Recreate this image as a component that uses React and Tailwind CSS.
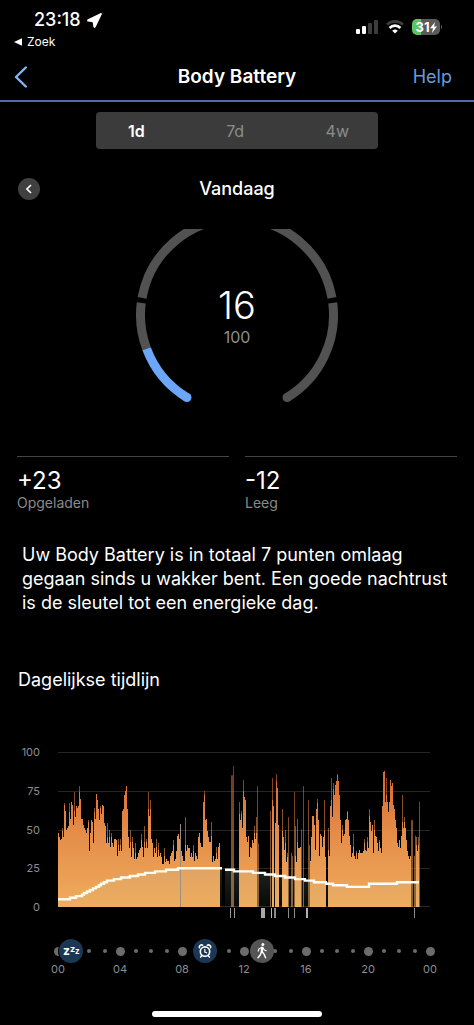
import React, { useState } from 'react';

const TABS = ['1d', '7d', '4w'];

// One value per column, `start` is the column where the segment begins
const STRESS = [
  {
    start: 0,
    values: [
      48, 45, 43, 44, 51, 45, 67, 62, 50, 51, 52, 67, 57, 68, 66, 53, 74, 58, 65, 64, 65, 78, 70,
      57, 57, 53, 51, 50, 48, 51, 56, 36, 48, 56, 55, 41, 64, 57, 73, 69, 63, 56, 65, 60, 66, 65,
      54, 52, 41, 54, 41, 50, 39, 48, 41, 39, 44, 44, 43, 33, 44, 36, 44, 36, 62, 63, 72, 75, 78,
      63, 45, 38, 50, 32, 45, 38, 31, 41, 31, 32, 35, 37, 38, 47, 39, 32, 52, 38, 44, 38, 74, 59,
      69, 44, 41, 32, 38, 35, 44, 32, 41, 33, 35, 32, 28, 28, 38, 29, 31, 30, 30, 28, 33, 35, 36,
      43, 30, 31, 36, 46, 47, 44, 53, 36, 33, 30, 30, 58, 36, 40, 38, 38, 32, 35, 32, 40, 30, 35,
      33, 31, 45, 48, 41, 39, 39, 68, 75, 56, 57, 49, 45, 42, 42, 55, 29, 33, 30, 31, 39, 31, 39,
      41,
    ],
  },
  {
    start: 181,
    values: [
      68, 56, 62, 51, 82, 71, 69, 45, 42, 46, 32, 39, 38, 43, 41, 52, 44, 58,
    ],
  },
  { start: 214, values: [83, 65] },
  { start: 217, values: [54, 86, 77, 53] },
  { start: 224, values: [63, 45, 37, 50, 29, 32] },
  { start: 237, values: [52, 29, 57, 38, 38, 39] },
  {
    start: 252,
    values: [30, 45, 59, 59, 53, 37, 63, 70, 56, 33, 47, 46, 39, 45, 69, 32],
  },
  {
    start: 270,
    values: [
      51, 33, 65, 83, 58, 80, 72, 79, 81, 86, 81, 72, 56, 41, 53, 46, 47, 56, 57, 62, 56, 46, 40,
      32, 35, 47, 33, 31, 36, 31, 35, 37, 35, 35, 35, 36, 44, 37, 36, 45, 38, 63, 55, 49, 53, 35,
      56, 46, 45, 41, 36, 43, 38, 35, 65, 87, 88, 68, 83, 68, 61, 68, 82, 78, 80, 66, 63, 56, 51,
      41, 39, 43, 38, 46, 72, 51, 58, 51, 43, 36, 33, 31, 33,
    ],
  },
  { start: 358, values: [45, 36, 45] },
];

// Short measurements, drawn faded
const FADED = [
  [173, 85], [174, 85], [175, 91], [199, 78], [200, 41], [212, 62], [229, 35], [230, 58],
  [233, 35], [234, 33], [236, 74], [243, 50], [245, 78], [250, 69], [251, 40], [353, 56],
  [354, 56], [356, 33], [357, 46], [361, 68],
];

const BATTERY = [
  [0, 5], [12, 6], [18, 7], [24, 8], [26, 9], [29, 10], [32, 11], [35, 12], [38, 13], [41, 14],
  [43, 15], [46, 16], [49, 17], [56, 18], [63, 19], [72, 20], [80, 21], [87, 22], [97, 23],
  [108, 24], [120, 25], [164, 25],
];
const BATTERY_AWAKE = [
  [167, 24], [176, 23], [195, 22], [207, 21], [217, 20], [227, 19], [237, 18], [247, 17],
  [256, 16], [268, 15], [275, 14], [289, 13], [311, 15], [339, 16], [361, 16],
];

const ACTIVITY = [
  [172, 1, '#9a9a9a'], [176, 1, '#9a9a9a'], [203, 4, '#a8a8a8'], [213, 1, '#b5b5b5'],
  [216, 2, '#8a8a8a'], [230, 1, '#8a8a8a'], [236, 1, '#8a8a8a'], [248, 2, '#b0b0b0'],
  [356, 1, '#8a8a8a'],
];

const LEVELS = [100, 75, 50, 25, 0];
const HOURS = Array.from({ length: 25 }, (_, i) => i);

const toY = (value) => 155 - value * 1.55;

const stepPath = (points) =>
  points
    .map(([x, v], i) => (i === 0 ? `M${x} ${toY(v)}` : `H${x}V${toY(v)}`))
    .join('');

const areaPath = (points) =>
  `${stepPath(points)}V155H${points[0][0]}Z`;

const arc = (from, to) => {
  const point = (deg) => {
    const rad = (deg * Math.PI) / 180;
    return `${101 + 96.5 * Math.cos(rad)} ${86 + 96.5 * Math.sin(rad)}`;
  };
  return `M${point(from)}A96.5 96.5 0 0 1 ${point(to)}`;
};

const StatusBar = () => (
  <div className="flex items-start justify-between pl-[14px] pr-8 pt-2">
    <div>
      <div className="flex items-center gap-[6px] pl-5 text-lg leading-6 font-medium">
        23:18
        <svg width="15" height="15" viewBox="0 0 15 15" fill="currentColor">
          <path d="M13.4.2.9 6.2C-.3 6.9-.1 8.4 1.2 8.5L5.7 9.2 6.4 13.8C6.6 15.1 8.1 15.3 8.7 14.1L14.7 1.6C15.1.5 14.5-.2 13.4.2Z" />
        </svg>
      </div>
      <a href="#zoek" className="flex items-center gap-1 text-xs leading-5">
        <svg width="9" height="8" viewBox="0 0 9 8" fill="currentColor">
          <path d="M0 4 8 7.8V.2Z" />
        </svg>
        Zoek
      </a>
    </div>
    <div className="flex items-center gap-2 pt-[11px]">
      <svg width="22" height="14" viewBox="0 0 22 14">
        <rect x="0" y="9" width="4" height="5" rx="1" fill="#fff" />
        <rect x="6" y="6" width="4" height="8" rx="1" fill="#fff" />
        <rect x="12" y="3" width="4" height="11" rx="1" fill="#3c3c3c" />
        <rect x="18" y="0" width="4" height="14" rx="1" fill="#3c3c3c" />
      </svg>
      <svg width="18" height="14" viewBox="0 0 18 14" fill="none" strokeWidth="2.6">
        <path d="M1 4.6A11.5 11.5 0 0 1 17 4.6" stroke="#3c3c3c" />
        <path d="M3.6 8A7.4 7.4 0 0 1 14.4 8" stroke="#fff" />
        <path d="M6.2 10.7A4.2 4.2 0 0 1 11.8 10.7L9 13.6Z" fill="#fff" />
      </svg>
      <div className="flex items-center">
        <div className="flex h-4 w-7 items-center justify-center rounded-[5px] bg-linear-to-r from-[#5cc466] from-31% to-[#5a5a5a] to-31% text-[13px] leading-4 font-bold">
          31
          <svg width="7" height="11" viewBox="0 0 7 11" fill="currentColor">
            <path d="M5 0 0 6.3H3L2 11 7 4.6H4Z" />
          </svg>
        </div>
        <div className="ml-px h-1 w-px rounded-r bg-[#5a5a5a]" />
      </div>
    </div>
  </div>
);

const Gauge = () => (
  <div className="relative mx-auto w-[202px]">
    <svg width="202" height="176" viewBox="0 0 202 176" fill="none" strokeWidth="9">
      <path d={arc(159.5, 187.2)} stroke="#525252" />
      <path d={arc(190.2, 349.8)} stroke="#525252" />
      <path d={arc(352.8, 418.8)} stroke="#525252" />
      <circle cx="151" cy="168.5" r="4.5" fill="#525252" />
      <path d={arc(121.2, 159.5)} stroke="#6ca6f8" />
      <circle cx="51" cy="168.5" r="4.5" fill="#6ca6f8" />
    </svg>
    <div className="absolute inset-0 flex flex-col items-center pt-14">
      <span className="text-[38px] leading-10 font-light">16</span>
      <span className="text-base text-[#8e8e8e]">100</span>
    </div>
  </div>
);

const Stat = ({ value, label }) => (
  <div className="border-t border-[#444] pt-2">
    <p className="text-2xl leading-8">{value}</p>
    <p className="text-sm leading-3 text-[#8a8a8a]">{label}</p>
  </div>
);

const Chart = () => (
  <svg viewBox="0 0 372 167" preserveAspectRatio="none" className="h-[167px] w-full">
    <defs>
      <linearGradient id="stress" x1="0" y1="0" x2="0" y2="155" gradientUnits="userSpaceOnUse">
        <stop offset="0.1" stopColor="#d9642c" />
        <stop offset="0.5" stopColor="#e38b48" />
        <stop offset="1" stopColor="#f0ad5c" />
      </linearGradient>
      <linearGradient id="battery" x1="0" y1="115" x2="0" y2="155" gradientUnits="userSpaceOnUse">
        <stop offset="0" stopColor="#b4c8b4" stopOpacity="0.18" />
        <stop offset="1" stopColor="#b4c8b4" stopOpacity="0.04" />
      </linearGradient>
    </defs>
    {LEVELS.map((level) => (
      <rect key={level} x="0" y={Math.min(Math.round(toY(level)), 154)} width="372" height="1" fill="#262626" />
    ))}
    {STRESS.map(({ start, values }) =>
      values.map((value, i) => {
        // the tip of a lone spike is faded
        const solid = Math.min(value, Math.max(values[i - 1] || 0, values[i + 1] || 0) + 4);
        return (
          <g key={start + i} fill="url(#stress)" shapeRendering="crispEdges">
            <rect x={start + i} y={toY(solid)} width="1" height={155 - toY(solid)} />
            <rect x={start + i} y={toY(value)} width="1" height={toY(solid) - toY(value)} opacity="0.6" />
          </g>
        );
      })
    )}
    {FADED.map(([x, value]) => (
      <rect key={x} x={x} y={toY(value)} width="1" height={155 - toY(value)} fill="url(#stress)" opacity="0.55" />
    ))}
    <rect x="122" y="72" width="1" height="83" fill="#9a8a80" />
    <path d={areaPath(BATTERY)} fill="url(#battery)" />
    <path d={areaPath(BATTERY_AWAKE)} fill="url(#battery)" />
    <path d={stepPath(BATTERY)} fill="none" stroke="#fffdf0" strokeWidth="2.4" />
    <path d={stepPath(BATTERY_AWAKE)} fill="none" stroke="#fff" strokeWidth="2.4" />
    {ACTIVITY.map(([x, width, color]) => (
      <rect key={x} x={x} y="156" width={width} height="10" fill={color} />
    ))}
  </svg>
);

const Timeline = () => (
  <div className="relative pt-5">
    <div className="flex h-6 items-center justify-between">
      {HOURS.map((hour) => (
        <div key={hour} className="flex w-0 justify-center">
          {hour % 4 === 0 ? (
            <span className="size-[9px] shrink-0 rounded-full bg-[#6c6c6c]" />
          ) : (
            <span className="size-1 shrink-0 rounded-full bg-[#6c6c6c]" />
          )}
        </div>
      ))}
    </div>
    <div className="flex justify-between text-[11px] leading-3 text-[#8e8e8e]">
      {HOURS.filter((hour) => hour % 4 === 0).map((hour) => (
        <div key={hour} className="flex w-0 justify-center">
          {String(hour % 24).padStart(2, '0')}
        </div>
      ))}
    </div>
    <div className="absolute top-5 left-[3.6%] flex size-6 -translate-x-1/2 items-center justify-center rounded-full bg-[#1c3754] font-bold ring-1 ring-black">
      <span className="text-xs leading-3">z</span>
      <span className="pb-1 text-[9px] leading-3">z</span>
      <span className="text-[8px] leading-3">z</span>
    </div>
    <div className="absolute top-5 left-[39.5%] flex size-6 -translate-x-1/2 items-center justify-center rounded-full bg-[#1c3754] ring-1 ring-black">
      <svg width="14" height="14" viewBox="0 0 14 14" fill="none" stroke="currentColor" strokeLinecap="round">
        <circle cx="7" cy="7.6" r="4.7" strokeWidth="1.6" />
        <path d="M1.4 3.6A2.2 2.2 0 0 1 4.6 1.2M12.6 3.6A2.2 2.2 0 0 0 9.4 1.2" strokeWidth="1.6" />
        <path d="M3.8 11.4 2.6 13.2M10.2 11.4 11.4 13.2" strokeWidth="1.4" />
        <path d="M6.8 5.4V8L8.6 8.8" strokeWidth="1.2" />
      </svg>
    </div>
    <div className="absolute top-5 left-[54.8%] flex size-6 -translate-x-1/2 items-center justify-center rounded-full bg-[#555]">
      <svg width="12" height="18" viewBox="0 0 12 18" fill="none" stroke="currentColor" strokeLinecap="round" strokeLinejoin="round">
        <circle cx="6.9" cy="2.6" r="1.5" fill="currentColor" stroke="none" />
        <path d="M6.2 5.8 5.8 9.6" strokeWidth="2.4" />
        <path d="M5.4 5.6 2.8 7 2.2 9.2M7 5.8 8.3 8 10.2 8.8" strokeWidth="1.1" />
        <path d="M5.4 10 4.4 12.8 2 15.8M6.2 9.8 8.2 12.4 9.6 15.8" strokeWidth="1.4" />
      </svg>
    </div>
  </div>
);

const App = () => {
  const [tab, setTab] = useState('1d');

  return (
    <div className="flex min-h-screen flex-col bg-black font-['Inter',sans-serif] text-white">
      <StatusBar />

      {/* Header */}
      <header className="grid h-[50px] grid-cols-3 items-center border-b-2 border-[#5868ad] px-[14px] pt-[2px] text-[19px]">
        <button aria-label="Terug" className="justify-self-start text-[#86b4f7]">
          <svg width="14" height="22" viewBox="0 0 14 22" fill="none" stroke="currentColor" strokeWidth="2.4" strokeLinecap="round" strokeLinejoin="round">
            <path d="M11.8 1.5 2 11 11.8 20.5" />
          </svg>
        </button>
        <h1 className="text-center font-semibold">Body Battery</h1>
        <a href="#help" className="justify-self-end pr-2 text-lg text-[#6b98de]">Help</a>
      </header>

      <main className="flex flex-1 flex-col">
        <div className="mx-24 mt-[10px] flex h-[37px] items-center justify-between rounded-sm bg-[#3b3b3b] pr-[29px] pl-8 text-base">
          {TABS.map((name) => (
            <button
              key={name}
              onClick={() => setTab(name)}
              className={tab === name ? 'font-semibold text-white' : 'text-[#8c8c8c]'}
            >
              {name}
            </button>
          ))}
        </div>

        <div className="mt-7 grid grid-cols-3 items-center px-[18px]">
          <button aria-label="Vorige dag" className="flex size-[22px] items-center justify-center rounded-full bg-[#404040]">
            <svg width="6" height="10" viewBox="0 0 6 10" fill="none" stroke="currentColor" strokeWidth="1.6">
              <path d="M5 1 1 5 5 9" />
            </svg>
          </button>
          <h2 className="text-center text-lg leading-6 font-medium">Vandaag</h2>
        </div>

        <div className="mt-7">
          <Gauge />
        </div>

        <div className="mt-[51px] grid grid-cols-2 gap-4 px-[17px]">
          <Stat value="+23" label="Opgeladen" />
          <Stat value="-12" label="Leeg" />
        </div>

        <p className="mt-[34px] px-[22px] text-lg leading-6">
          Uw Body Battery is in totaal 7 punten omlaag gegaan sinds u wakker bent. Een goede
          nachtrust is de sleutel tot een energieke dag.
        </p>

        <h3 className="mt-[53px] px-[18px] text-lg leading-6">Dagelijkse tijdlijn</h3>

        <div className="mt-[60px] flex pr-11">
          <div className="-mt-2 mr-[18px] flex h-[171px] w-10 flex-col justify-between text-right text-[11px] leading-4 text-[#8e8e8e]">
            {LEVELS.map((level) => (
              <span key={level}>{level}</span>
            ))}
          </div>
          <div className="min-w-0 flex-1">
            <Chart />
            <Timeline />
          </div>
        </div>
      </main>

      <div className="mx-auto mt-auto mb-2 h-[6px] w-[170px] rounded-full bg-white" />
    </div>
  );
};

export default App;
